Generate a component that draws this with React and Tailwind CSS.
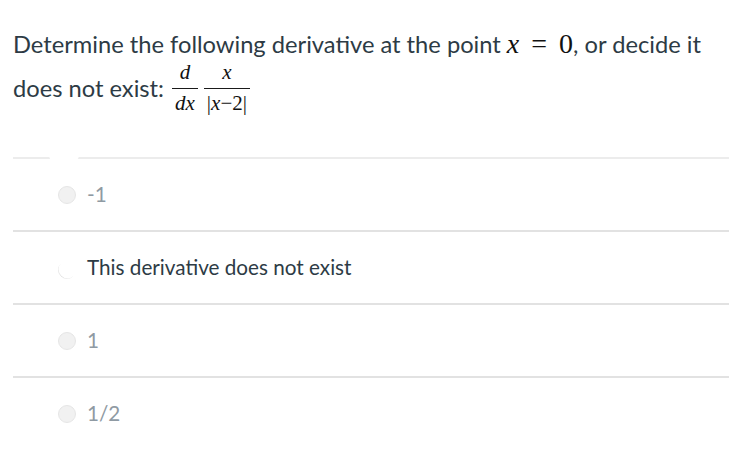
import React from "react";

const Frac = ({ num, den, className }) => (
  <span className={"inline-flex flex-col items-center align-middle mx-[2px] " + (className || "")}>
    <span className="leading-none pb-[5px] px-[2px]">{num}</span>
    <span className="leading-none pt-[4px] px-[3px] border-t border-[#1a1a1a]">{den}</span>
  </span>
);

const Option = ({ label, selected, first }) => (
  <div
    className={
      "relative flex items-center h-[73px] border-t-2 " +
      (first ? "border-[#ececec]" : "border-[#e2e2e2]")
    }
  >
    {first && (
      <div className="absolute left-[36px] top-[-4px] w-[30px] h-[8px] bg-white rounded-b-full" />
    )}
    {selected ? (
      <span className="ml-[45px] mt-[4px] w-[18px] h-[18px] rounded-full bg-white border-b border-[#e4e4e4] rotate-45" />
    ) : (
      <span className="ml-[45px] w-[18px] h-[18px] rounded-full bg-[#f1f1f1] border border-[#e6e6e6]" />
    )}
    <span
      className={
        "ml-[11px] text-[20.7px] " + (selected ? "text-[#2d3b45]" : "text-[#8f9aa3]")
      }
    >
      {label}
    </span>
  </div>
);

export default function App() {
  return (
    <div className="w-[748px] h-[462px] bg-white overflow-hidden font-['Lato',_'Noto_Sans',_sans-serif]">
      <div className="pl-[13px] pr-[19px]">
        <div className="pt-[26px] text-[23.7px] text-[#2d3b45] leading-[36px] h-[157px]">
          <div className="whitespace-nowrap flex items-baseline">
            <span>Determine the following derivative at the point</span>
            <span className="ml-[6px] font-['Liberation_Serif',_serif] text-[28px] text-[#111]">
              <i>x</i>
              <span className="mx-[12px] not-italic">=</span>
              <span>0</span>
            </span>
            <span>, or decide it</span>
          </div>
          <div className="flex items-center whitespace-nowrap">
            <span>does not exist:</span>
            <span className="ml-[6px] inline-flex items-center font-['Liberation_Serif',_serif] text-[21px] text-[#111]">
              <Frac num={<i>d</i>} den={<i>dx</i>} />
              <Frac
                className="ml-[4px]"
                num={<i>x</i>}
                den={
                  <span>
                    |<i>x</i>−2|
                  </span>
                }
              />
            </span>
          </div>
        </div>
        <Option label="-1" first />
        <Option label="This derivative does not exist" selected />
        <Option label="1" />
        <Option label="1/2" />
      </div>
    </div>
  );
}
